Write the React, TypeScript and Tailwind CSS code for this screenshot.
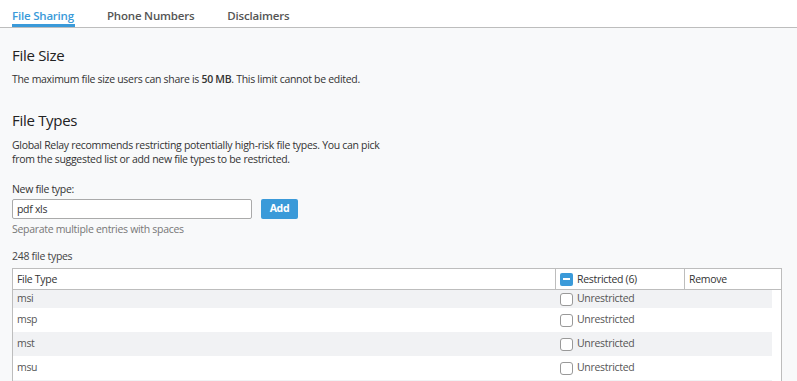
import React from "react";

const rows = [
  { name: "msi", gray: true },
  { name: "msp", gray: false },
  { name: "mst", gray: true },
  { name: "msu", gray: false },
  { name: "mui", gray: true },
];

export default function App() {
  return (
    <div className="w-[797px] h-[381px] overflow-hidden bg-[#f8f9fa] text-[#333] [font-family:'Open_Sans',sans-serif] text-[10.5px] tracking-[-0.3px]">
      <div className="h-[28px] bg-white border-b border-[#bdbdbd] flex pl-[12px] text-[11.5px] tracking-[-0.2px] font-semibold">
        <div className="relative pt-[7px] w-[63px] text-[#3a9ad9] whitespace-nowrap">
          File Sharing
          <div className="absolute left-0 right-0 bottom-0 h-[3px] bg-[#3a9ad9]" />
        </div>
        <div className="pt-[7px] ml-[32px] text-[#555] whitespace-nowrap">Phone Numbers</div>
        <div className="pt-[7px] ml-[33px] text-[#555] whitespace-nowrap">Disclaimers</div>
      </div>
      <div className="px-[12px]">
        <h2 className="text-[15px] tracking-[-0.3px] leading-[22px] mt-[16px] text-[#222]">File Size</h2>
        <p className="leading-[15px] mt-[6px]">
          The maximum file size users can share is <b className="font-semibold">50 MB</b>. This limit cannot be edited.
        </p>
        <h2 className="text-[15px] tracking-[-0.3px] leading-[22px] mt-[22px] text-[#222]">File Types</h2>
        <p className="leading-[14px] mt-[7px] w-[372px]">
          Global Relay recommends restricting potentially high-risk file types. You can pick from the suggested list or add new file types to be restricted.
        </p>
        <div className="leading-[15px] mt-[16px]">New file type:</div>
        <div className="flex gap-[9px] mt-[2px]">
          <div className="w-[240px] h-[20px] border border-[#aaa] rounded-[2px] bg-white leading-[18px] pl-[4px]">pdf xls</div>
          <button className="w-[37px] h-[20px] rounded-[2px] bg-[#3a9ad9] text-white font-bold">Add</button>
        </div>
        <div className="leading-[15px] mt-[3px] text-[#777]">Separate multiple entries with spaces</div>
        <div className="leading-[15px] mt-[12px] text-[#444]">248 file types</div>
        <div className="mt-[4px] w-[770px] h-[200px] border border-[#bdbdbd] bg-white">
          <div className="flex h-[21px] border-b border-[#bdbdbd] leading-[20px]">
            <div className="w-[543px] pl-[4px] border-r border-[#bdbdbd]">File Type</div>
            <div className="w-[129px] pl-[4px] border-r border-[#bdbdbd] flex items-center gap-[4px]">
              <span className="w-[13px] h-[13px] rounded-[2px] bg-[#3a9ad9] flex items-center justify-center">
                <span className="w-[7px] h-[2px] bg-white" />
              </span>
              <span>Restricted (6)</span>
            </div>
            <div className="flex-1 pl-[4px]">Remove</div>
          </div>
          <div className="h-[100px] overflow-hidden w-[759px]">
            <div className="mt-[-6px]">
              {rows.map((r) => (
                <div key={r.name} className={`flex h-[24px] items-center text-[#555] ${r.gray ? "bg-[#f1f2f4]" : "bg-white"}`}>
                  <div className={`w-[543px] pl-[4px] ${r.name === "msi" ? "pt-[6px]" : ""}`}>{r.name}</div>
                  <div className={`flex items-center gap-[4px] pl-[4px] ${r.name === "msi" ? "pt-[6px]" : ""}`}>
                    <span className="w-[13px] h-[13px] rounded-[3px] border border-[#999] bg-white" />
                    <span>Unrestricted</span>
                  </div>
                </div>
              ))}
            </div>
          </div>
        </div>
      </div>
    </div>
  );
}
